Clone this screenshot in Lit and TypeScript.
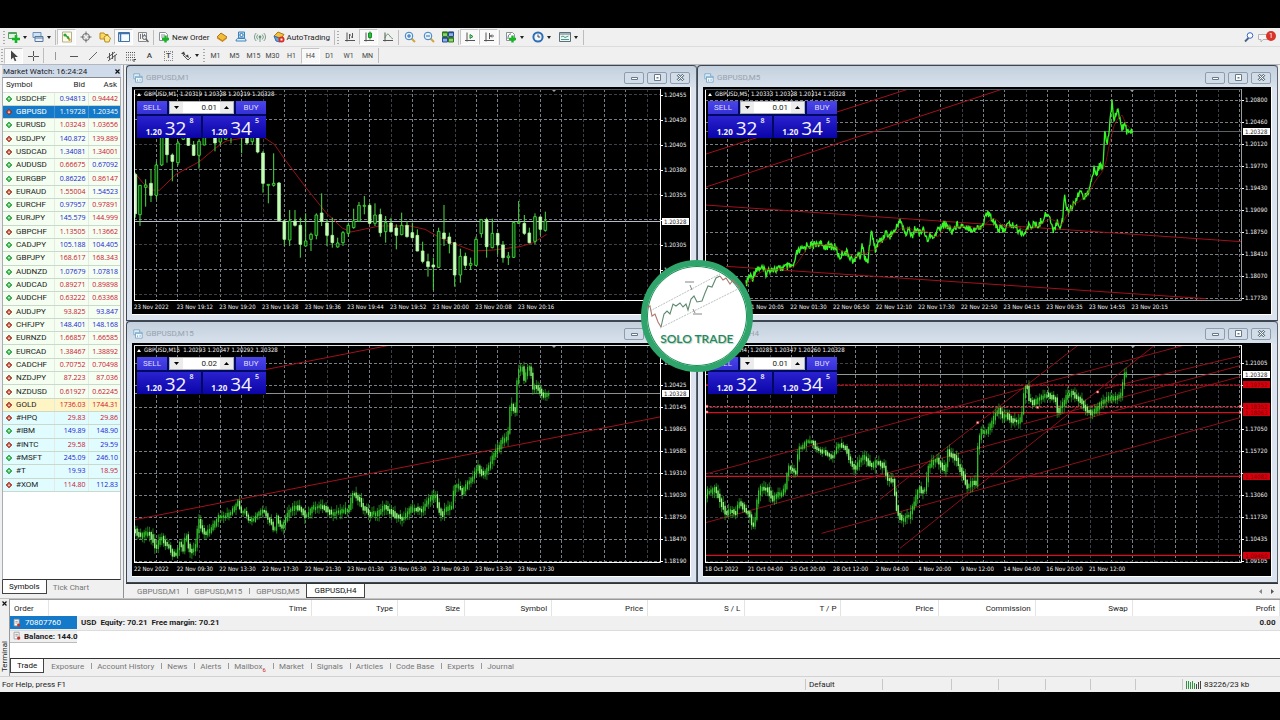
import { LitElement, html, svg, css } from "lit";
import { customElement, property } from "lit/decorators.js";
import { classMap } from "lit/directives/class-map.js";

/* ---------- icons (12 x 12 units) ---------- */
const doc = svg`<path d="M1.5 1.5h6l2 2v6h-8z" fill="#fff" stroke="#8a9097"/>`;
const plus = svg`<path d="M7.5 4.5v7M4 8h7" stroke="#17b526" stroke-width="2.4"/>`;
const axes = svg`<path d="M3 1.5v9M1 9.5h10" stroke="#555" fill="none"/>`;
const icons: Record<string, unknown> = {
  newChart: svg`<path d="M.5 1.5h8v6h-8z" fill="#dff3e2" stroke="#55a060"/><path d="M.5 2.5h8" stroke="#55a060"/><path d="M8 4v8M4 8h8" stroke="#17b526" stroke-width="2.6"/>`,
  profiles: svg`<path d="M1 1.500h8v5h-8z" fill="#cfe0f3" stroke="#6e8fb5"/><path d="M3 5.500h8v5h-8z" fill="#e8f1fb" stroke="#56789f"/><path d="M3 7h8" stroke="#56789f"/>`,
  market: svg`<path d="M1.500 1h9v10h-9z" fill="#fffbe3" stroke="#b5b190"/><path d="M3.500 3.500l2.500 2 2.500 3" stroke="#25983a" stroke-width="1.200" fill="none"/><circle cx="4" cy="4" r="1.600" fill="#2aa43f"/><circle cx="7" cy="6.500" r="1.200" fill="#2aa43f"/><circle cx="8.500" cy="8.800" r="1.200" fill="#c99a2a"/>`,
  target: svg`<circle cx="6" cy="6" r="3.500" fill="none" stroke="#6c6c6c"/><path d="M6 .5v4M6 7.500v4M.5 6h4M7.500 6h4" stroke="#6c6c6c"/>`,
  stars: svg`<path d="M1 2h4l1 1.500h3V8H1z" fill="#fbd95e" stroke="#b88a1e"/><path d="M5 6l3-2 3.500 3-1.500 4H6z" fill="#ffe98a" stroke="#b88a1e"/>`,
  panel: svg`<path d="M.5 1.500h11v9H.5z" fill="#f6fbff" stroke="#4273a9"/><path d="M1 2.500h10M2.500 3v7" stroke="#4273a9" stroke-width="1.500"/>`,
  tester: svg`<path d="M1.500 1.500h8v9h-8z" fill="#f4f4f4" stroke="#888"/><path d="M3.500 3v5M5.500 2.500v4M7.500 3v3" stroke="#777"/><circle cx="7.500" cy="6.500" r="2" fill="#dfe8f0" stroke="#666"/><path d="M9 8l2.500 3" stroke="#666" stroke-width="1.500"/>`,
  order: svg`${doc}<path d="M3 4h4M3 6h3" stroke="#8a9097"/>${plus}`,
  gold: svg`<path d="M1 6l4-4 6 4-4.500 4z" fill="#f3bd3a" stroke="#a8741a"/><path d="M1 6v1.500L6.500 11 11 7.500V6L6.500 9.500z" fill="#c98a1f"/>`,
  person: svg`<path d="M3.500 1h6v6h-6z" fill="#bcdcf6" stroke="#3c83bd"/><circle cx="6.500" cy="4" r="1.600" fill="#fff" stroke="#2f73ac"/><path d="M1 10c0-2.500 2-2.500 3-2.500h5c1.500 0 2 1 2 2.500z" fill="#e5f1fb" stroke="#3c83bd"/>`,
  signal: svg`<circle cx="6" cy="6" r="1.400" fill="#4c9f5d"/><path d="M3.800 8.500a3.500 3.500 0 010-5M8.200 8.500a3.500 3.500 0 000-5M2.200 10a5.500 5.500 0 010-8M9.800 10a5.500 5.500 0 000-8M6 6v5" stroke="#7c9a90" fill="none"/>`,
  auto: svg`<path d="M1 5l4-4 6 2.500-3 4z" fill="#f2c23d" stroke="#a97b19"/><path d="M1 5l2 5 4 1V7.500z" fill="#6aa5dc" stroke="#3a6da4"/><circle cx="8.500" cy="8.500" r="3" fill="#d92b1f"/><path d="M7.500 7.500h2v2h-2z" fill="#fff"/>`,
  bars: svg`${axes}<path d="M5.500 3v5M8.500 2v5M5.500 4h1.500M7 6h1.500" stroke="#555"/>`,
  candles: svg`${axes}<path d="M7 .5v8" stroke="#188d27"/><path d="M5.500 2h3v4.500h-3z" fill="#27c43a" stroke="#188d27"/>`,
  line: svg`${axes}<path d="M3 7c1.500-4 3-5 4.500-2.500S10 7 11 8" stroke="#5a8d62" fill="none"/>`,
  zoomIn: svg`<path d="M7.500 7.500l3.500 3.500" stroke="#d0a53a" stroke-width="2"/><circle cx="5" cy="5" r="3.800" fill="#e6f2fd" stroke="#3b7ec2"/><path d="M3 5h4M5 3v4" stroke="#2a6bb0"/>`,
  zoomOut: svg`<path d="M7.500 7.500l3.500 3.500" stroke="#d0a53a" stroke-width="2"/><circle cx="5" cy="5" r="3.800" fill="#e6f2fd" stroke="#3b7ec2"/><path d="M3 5h4" stroke="#2a6bb0"/>`,
  tile: svg`<path d="M.5 1h5v4.500h-5zM6.500 6.500h5V11h-5z" fill="#8fd070" stroke="#2b7a1c"/><path d="M6.500 1h5v4.500h-5zM.5 6.500h5V11h-5z" fill="#8fb0e6" stroke="#274b8b"/><path d="M.5 1.500h5M6.500 7h5" stroke="#2b7a1c" stroke-width="1.600"/><path d="M6.500 1.500h5M.5 7h5" stroke="#274b8b" stroke-width="1.600"/>`,
  scroll: svg`${axes}<path d="M6 3.500v4L9 5.500z" fill="#8fd79a" stroke="#2b8f3b"/>`,
  shift: svg`${axes}<path d="M6.500 2v6M7 5h4M9 3.500L7.500 5 9 6.500" stroke="#555" fill="none"/>`,
  indicators: svg`${doc}<path d="M3 8c0-5 2-5 3-5" stroke="#666" fill="none"/>${plus}`,
  clock: svg`<circle cx="6" cy="6" r="4.600" fill="#f1f7fe" stroke="#2c6fb7" stroke-width="2"/><path d="M6 3.500V6h2.200" stroke="#444" fill="none"/>`,
  template: svg`<path d="M.5 1.500h11v9H.5z" fill="#eef6f4" stroke="#5b6f7c"/><path d="M1 3h10" stroke="#5b6f7c"/><path d="M2 6l2-1 2 1.500L9.500 5M2 8.500h8" stroke="#4a9a8a" fill="none"/>`,
  cursor: svg`<path d="M3 .5v9l2.200-2 1.600 3.800 1.500-.7-1.600-3.600H10z" fill="#444"/>`,
  cross: svg`<path d="M6.500 1v10M1 6.500h11" stroke="#555"/><path d="M6 6h1v1H6z" fill="#f0f0f0"/>`,
  vline: svg`<path d="M6.500 2v8" stroke="#999"/>`,
  hline: svg`<path d="M2 6.500h8" stroke="#555"/>`,
  trend: svg`<path d="M2 10L10 2" stroke="#666"/>`,
  channel: svg`<path d="M1 8l8-6M2 11l9-7M3.500 3v7M6.500 2v7M9 5v6" stroke="#555"/>`,
  fibo: svg`<path d="M1 2.500h10M1 5h10M1 7.500h10M1 10h7" stroke="#555" stroke-dasharray="1 1"/><path d="M9 9v3M9 9.500h2" stroke="#444"/>`,
  arrows: svg`<path d="M1 3.500l3-2 1.500 4zM5 6l3-1.500L9 8z" fill="#444"/><path d="M3 5l5 5M8 10l3-3" stroke="#555"/>`,
  search: svg`<path d="M2 10.500l3.500-3.500" stroke="#49617f" stroke-width="1.800"/><circle cx="7" cy="4.500" r="2.800" fill="#fff" stroke="#3566c9"/>`,
  chat: svg`<path d="M.5 3.500h9v5H5L3 11V8.500H.5z" fill="#f7f7f7" stroke="#b4b4b4"/>`,
  page: svg`<path d="M2.500 1.500h6v8h-6z" fill="#fff" stroke="#999"/><path d="M4 4h3M4 6h3" stroke="#888"/><circle cx="8" cy="8.500" r="2" fill="#c9342a"/>`,
  windows: svg`<path d="M1 1h7v6H1z" fill="#eef6fc" stroke="#6ea3c8"/><path d="M3 4h8v7H3z" fill="#fff" stroke="#6ea3c8"/><path d="M3 5.500h8M5.500 7.500V10M8.500 7v2.500" stroke="#6ea3c8"/>`,
};
const icon = (name: string) => html`<svg class="icon" viewBox="0 0 12 12" aria-hidden="true">${icons[name]}</svg>`;

/* ---------- data ---------- */
type Quote = [string, "u" | "d", string, "b" | "r", string, "b" | "r"];
const quotes: Quote[] = [
  ["USDCHF", "u", "0.94813", "b", "0.94442", "r"], ["GBPUSD", "d", "1.19728", "b", "1.20345", "b"],
  ["EURUSD", "u", "1.03243", "r", "1.03656", "r"], ["USDJPY", "d", "140.872", "b", "139.889", "r"],
  ["USDCAD", "d", "1.34081", "b", "1.34001", "r"], ["AUDUSD", "u", "0.66675", "r", "0.67092", "b"],
  ["EURGBP", "u", "0.86226", "b", "0.86147", "r"], ["EURAUD", "d", "1.55004", "r", "1.54523", "b"],
  ["EURCHF", "u", "0.97957", "b", "0.97891", "r"], ["EURJPY", "u", "145.579", "b", "144.999", "r"],
  ["GBPCHF", "d", "1.13505", "r", "1.13662", "r"], ["CADJPY", "u", "105.188", "b", "104.405", "b"],
  ["GBPJPY", "u", "168.617", "r", "168.343", "r"], ["AUDNZD", "u", "1.07679", "b", "1.07818", "b"],
  ["AUDCAD", "u", "0.89271", "r", "0.89898", "r"], ["AUDCHF", "u", "0.63222", "r", "0.63368", "r"],
  ["AUDJPY", "d", "93.825", "r", "93.847", "b"], ["CHFJPY", "d", "148.401", "b", "148.168", "b"],
  ["EURNZD", "d", "1.66857", "r", "1.66585", "r"], ["EURCAD", "u", "1.38467", "r", "1.38892", "r"],
  ["CADCHF", "d", "0.70752", "r", "0.70498", "r"], ["NZDJPY", "d", "87.223", "r", "87.036", "r"],
  ["NZDUSD", "d", "0.61927", "r", "0.62245", "r"], ["GOLD", "d", "1736.03", "r", "1744.31", "r"],
  ["#HPQ", "d", "29.83", "r", "29.86", "r"], ["#IBM", "u", "149.89", "b", "148.90", "b"],
  ["#INTC", "d", "29.58", "r", "29.59", "b"], ["#MSFT", "u", "245.09", "b", "246.10", "b"],
  ["#T", "u", "19.93", "b", "18.95", "r"], ["#XOM", "d", "114.80", "r", "112.83", "b"],
];

/* x, high, low, body top, body bottom, filled */
const m1Candles: number[][] = [
  [28, 320, 455, 325, 443, 1], [42, 358, 480, 358, 446, 0], [59, 340, 422, 357, 364, 0], [75, 310, 408, 352, 388, 1],
  [91, 287, 400, 297, 388, 0], [107, 200, 300, 200, 297, 0], [123, 200, 290, 200, 266, 1], [139, 262, 346, 267, 286, 1],
  [156, 225, 298, 231, 290, 0], [172, 200, 222, 200, 220, 0], [187, 200, 240, 200, 238, 1], [203, 225, 270, 237, 268, 1],
  [219, 220, 308, 226, 268, 0], [235, 200, 238, 200, 237, 0], [267, 200, 256, 200, 231, 1], [283, 210, 237, 214, 228, 0],
  [299, 200, 222, 200, 220, 0], [315, 200, 232, 200, 212, 0], [347, 200, 262, 200, 212, 0], [363, 200, 237, 200, 231, 1],
  [379, 200, 237, 200, 227, 0], [395, 200, 262, 200, 258, 1], [411, 255, 380, 261, 352, 1], [427, 355, 412, 355, 358, 0],
  [443, 262, 362, 352, 358, 0], [459, 348, 466, 351, 464, 1], [475, 460, 540, 465, 520, 1], [491, 432, 540, 465, 522, 0],
  [507, 432, 482, 465, 478, 1], [523, 455, 575, 478, 535, 1], [539, 442, 540, 525, 540, 0], [555, 500, 555, 505, 520, 0],
  [571, 442, 520, 447, 508, 0], [587, 382, 480, 441, 466, 1], [603, 460, 540, 471, 508, 1], [619, 455, 545, 508, 530, 1],
  [635, 515, 545, 531, 543, 0], [651, 495, 540, 500, 530, 0], [667, 470, 512, 478, 502, 0], [683, 428, 488, 465, 485, 0],
  [699, 408, 466, 418, 466, 0], [715, 390, 445, 418, 421, 0], [731, 410, 474, 418, 472, 1], [747, 412, 480, 447, 472, 0],
  [763, 428, 512, 446, 500, 1], [779, 450, 530, 470, 497, 0], [795, 455, 500, 471, 497, 1], [811, 475, 550, 486, 508, 1],
  [827, 440, 508, 478, 506, 0], [843, 465, 515, 478, 512, 1], [859, 470, 518, 500, 515, 1], [874, 490, 556, 508, 555, 1],
  [890, 527, 592, 555, 586, 1], [906, 563, 632, 587, 602, 1], [922, 575, 672, 597, 603, 1], [938, 485, 606, 496, 604, 0],
  [954, 417, 540, 501, 518, 1], [970, 500, 562, 513, 532, 1], [986, 528, 662, 530, 627, 1], [1003, 548, 650, 571, 627, 0],
  [1018, 560, 608, 571, 598, 1], [1034, 575, 612, 592, 598, 0], [1050, 512, 600, 520, 598, 0], [1066, 459, 515, 461, 503, 0],
  [1082, 455, 575, 461, 542, 1], [1099, 458, 547, 502, 545, 0], [1115, 500, 565, 502, 537, 1], [1131, 525, 590, 537, 575, 1],
  [1147, 558, 597, 570, 575, 0], [1163, 466, 576, 470, 574, 0], [1178, 405, 474, 468, 472, 0], [1195, 447, 507, 472, 502, 1],
  [1210, 485, 532, 501, 530, 1], [1227, 442, 535, 452, 526, 0], [1243, 452, 508, 453, 490, 1], [1258, 437, 497, 465, 493, 0],
];
const m1Average = "30,325 50,350 75,372 100,373 150,325 220,287 270,245 300,225 360,215 415,215 445,235 480,285 540,365 600,440 650,487 675,498 760,480 852,480 897,490 942,515 1002,540 1042,555 1102,552 1182,542 1222,530 1262,505";

const m5Points = [150, 655, 160, 630, 170, 635, 180, 608, 195, 605, 212, 622, 225, 605, 240, 612, 260, 605, 285, 603, 297, 598, 300, 562, 320, 550, 335, 535, 350, 540, 365, 530, 380, 540, 400, 540, 420, 545, 430, 575, 445, 555, 460, 568, 475, 590, 485, 560, 492, 575, 498, 532, 505, 570, 517, 585, 525, 492, 537, 550, 550, 525, 560, 520, 567, 497, 580, 510, 600, 490, 612, 457, 620, 485, 630, 505, 640, 490, 650, 510, 660, 480, 670, 508, 678, 485, 690, 512, 696, 532, 702, 500, 712, 525, 722, 495, 740, 475, 755, 480, 768, 495, 785, 475, 810, 480, 835, 490, 858, 482, 872, 440, 892, 460, 907, 490, 922, 490, 940, 475, 957, 480, 970, 498, 987, 500, 1002, 475, 1027, 480, 1042, 455, 1057, 440, 1070, 493, 1082, 470, 1092, 480, 1100, 455, 1105, 387, 1114, 435, 1132, 415, 1152, 372, 1160, 393, 1177, 375, 1187, 350, 1194, 302, 1202, 330, 1210, 295, 1217, 310, 1222, 285, 1226, 200, 1234, 245, 1242, 165, 1248, 107, 1255, 163, 1267, 122, 1276, 190, 1284, 175, 1292, 195, 1310, 198];
const m15Points = [28, 632, 38, 640, 45, 648, 60, 640, 72, 640, 80, 655, 92, 685, 108, 652, 118, 670, 130, 680, 140, 700, 152, 705, 165, 665, 173, 690, 182, 640, 192, 690, 205, 692, 213, 670, 219, 598, 228, 625, 240, 645, 255, 630, 270, 610, 280, 590, 300, 590, 318, 580, 330, 560, 338, 545, 347, 575, 360, 575, 370, 600, 385, 600, 400, 580, 415, 570, 430, 600, 440, 610, 447, 638, 455, 590, 468, 625, 480, 600, 490, 575, 515, 560, 530, 575, 542, 590, 560, 565, 590, 560, 620, 580, 650, 575, 670, 570, 683, 520, 700, 535, 715, 565, 735, 582, 760, 580, 775, 560, 795, 575, 815, 590, 835, 595, 856, 568, 870, 568, 892, 570, 902, 550, 922, 530, 932, 530, 940, 570, 952, 585, 962, 565, 982, 562, 986, 500, 1002, 500, 1012, 518, 1027, 490, 1042, 475, 1057, 440, 1072, 465, 1092, 440, 1102, 410, 1117, 390, 1132, 360, 1142, 360, 1152, 325, 1155, 250, 1170, 275, 1178, 150, 1192, 145, 1197, 180, 1207, 145, 1216, 145, 1222, 205, 1230, 200, 1242, 210, 1252, 227, 1270, 224];
const h4Points = [197, 730, 203, 710, 215, 710, 225, 700, 235, 715, 245, 745, 260, 775, 275, 770, 290, 775, 298, 745, 308, 750, 320, 770, 330, 775, 340, 815, 348, 790, 352, 745, 362, 700, 370, 700, 385, 705, 400, 735, 415, 720, 430, 715, 440, 690, 446, 635, 460, 645, 470, 655, 478, 580, 490, 580, 500, 560, 520, 560, 530, 580, 545, 590, 555, 590, 570, 603, 583, 605, 590, 580, 600, 570, 615, 575, 625, 590, 632, 620, 648, 640, 660, 620, 675, 605, 685, 620, 695, 635, 715, 620, 735, 635, 745, 675, 765, 678, 768, 745, 778, 780, 790, 795, 800, 785, 810, 785, 820, 760, 830, 730, 838, 700, 850, 710, 860, 700, 865, 640, 880, 620, 895, 615, 905, 630, 918, 650, 925, 590, 935, 600, 950, 610, 965, 650, 975, 670, 985, 698, 1000, 680, 1012, 690, 1016, 575, 1025, 530, 1045, 530, 1058, 500, 1070, 475, 1080, 465, 1090, 485, 1102, 480, 1115, 495, 1135, 500, 1145, 495, 1150, 465, 1156, 397, 1165, 400, 1170, 435, 1185, 445, 1200, 430, 1225, 420, 1245, 430, 1252, 435, 1256, 485, 1262, 460, 1275, 440, 1285, 420, 1300, 415, 1315, 430, 1330, 445, 1340, 465, 1355, 475, 1370, 465, 1385, 445, 1405, 430, 1430, 430, 1445, 420, 1452, 375, 1456, 357, 1460, 357];

const noise = (i: number) => {
  const v = Math.sin(i * 12.9898) * 43758.5453;
  return v - Math.floor(v);
};
const valueAt = (pts: number[], x: number) => {
  for (let i = 2; i < pts.length; i += 2)
    if (x <= pts[i]) return pts[i - 1] + ((pts[i + 1] - pts[i - 1]) * (x - pts[i - 2])) / (pts[i] - pts[i - 2]);
  return pts[pts.length - 1];
};
const samples = (pts: number[], step: number) => {
  const out: number[] = [];
  for (let x = pts[0]; x <= pts[pts.length - 2]; x += step) out.push(x);
  return out;
};
const dense = (pts: number[]) =>
  svg`<polyline fill="none" stroke="#37f527" stroke-width="4" points=${samples(pts, 2)
    .map((x, i) => `${x},${(valueAt(pts, x) + (noise(i) - 0.5) * 25).toFixed(1)}`).join(" ")}/>`;
const small = (pts: number[], step: number) =>
  samples(pts, step).map((x, i) => {
    const a = valueAt(pts, x - step / 2), b = valueAt(pts, x + step / 2);
    const top = Math.min(a, b) - 2 - noise(i) * 7, bot = Math.max(a, b) + 2 + noise(i + 9) * 7;
    const down = b > a;
    return svg`<path d="M${x} ${top - 2 - noise(i + 3) * 16}V${bot + 2 + noise(i + 5) * 16}" stroke="#2fb428" stroke-width="2"/>
      <path d="M${x} ${top}V${bot}" stroke=${down ? "#8ff57c" : "#35d62d"} stroke-width=${down ? 4 : 3}/>`;
  });
const follow = (pts: number[], lag: number) =>
  svg`<polyline fill="none" stroke="#b01414" stroke-width="2" points=${samples(pts, 12)
    .map((x) => `${x},${((valueAt(pts, x) + valueAt(pts, Math.max(pts[0], x - lag)) + valueAt(pts, Math.max(pts[0], x - 2 * lag))) / 3).toFixed(1)}`).join(" ")}/>`;
const red = (d: string, w = 2) => svg`<path d=${d} fill="none" stroke="#a3101c" stroke-width=${w}/>`;
const dot = (x: number, y: number) => svg`<path d="M${x - 3} ${y - 3}h6v6h-6z" fill="#fff" stroke="#f03a3a" stroke-width="2"/>`;

interface Chart {
  name: string; head: string; lot: string; box: number[]; first: number; pitch: number; dimRows: string;
  price: number; priceColor: string; frame: string; marker: number; pad: number; gap: number;
  labels: string[]; times: string[]; tags: [number, string][]; art: unknown;
}
const nov = (day: string, list: string) => list.split(" ").map((t) => `${day} Nov ${t}`);
const charts: Chart[] = [
  {
    name: "GBPUSD,M1", head: "GBPUSD,M1  1.20319 1.20338 1.20319 1.20328", lot: "0.01", box: [134, 89, 527, 212],
    first: 94, pitch: 25, dimRows: "alt", price: 221, priceColor: "#b9b9cc", frame: "#fff", marker: 554, pad: 0, gap: 13,
    labels: ["1.20455", "1.20430", "1.20405", "1.20380", "1.20355", "", "1.20305", "1.20280"],
    times: ["23 Nov 2022", ...nov("23", "19:12 19:20 19:28 19:36 19:44 19:52 20:00 20:08 20:16")], tags: [],
    art: svg`<g transform="translate(126 66) scale(.33333)"><polyline points=${m1Average} fill="none" stroke="#9c1216" stroke-width="3"/>
      ${m1Candles.map(([x, h, l, t, b, f]) => svg`<path d="M${x} ${h}V${l}" stroke="#4ade42" stroke-width="3"/>
        <path d="M${x - 4} ${t}h8V${b}h-8z" fill=${f ? "#c6ffb8" : "#033d06"} stroke=${f ? "#b2f7a4" : "#4be043"} stroke-width="2.5"/>`)}</g>`,
  },
  {
    name: "GBPUSD,M5", head: "GBPUSD,M5  1.20333 1.20338 1.20314 1.20328", lot: "0.01", box: [705, 89, 537, 212],
    first: 100, pitch: 22, dimRows: "", price: 131, priceColor: "#5c6064", frame: "#9a9da0", marker: 1132, pad: 5, gap: 10,
    labels: ["1.20800", "1.20460", "1.20120", "1.19770", "1.19430", "1.19090", "1.18750", "1.18410", "1.18070", "1.17730"],
    times: ["21 Nov 2022", "21 Nov 20:05", ...nov("22", "01:30 06:50 12:10 17:30 22:50"), ...nov("23", "04:15 09:35 14:55 20:15")], tags: [],
    art: svg`<g transform="translate(696 66) scale(.33333)">${red("M27 265L635 70M27 364L917 70M27 417L1636 527M90 601L1530 698", 3)}
      ${dense(m5Points)}${follow(m5Points, 14)}</g>`,
  },
  {
    name: "GBPUSD,M15", head: "GBPUSD,M15  1.20293 1.20347 1.20292 1.20328", lot: "0.02", box: [134, 345, 527, 218],
    first: 363, pitch: 22, dimRows: "", price: 393, priceColor: "#8d9092", frame: "#fff", marker: 554, pad: 12, gap: 10,
    labels: ["1.20705", "1.20425", "1.20145", "1.19865", "1.19585", "1.19310", "1.19030", "1.18750", "1.18470", "1.18190"],
    times: ["22 Nov 2022", ...nov("22", "09:30 13:30 17:30 21:30"), ...nov("23", "01:30 05:30 09:30 13:30 17:30")], tags: [],
    art: svg`<g transform="translate(126 320) scale(.33333)">${red("M27 599L1606 290M300 172L795 75", 3)}${small(m15Points, 5.3)}</g>`,
  },
  {
    name: "GBPUSD,H4", head: "GBPUSD,H4  1.20285 1.20347 1.20260 1.20328", lot: "0.01", box: [705, 345, 537, 218],
    first: 363, pitch: 22, dimRows: "all", price: 374, priceColor: "#8e9c98", frame: "#fff", marker: 1133, pad: 12, gap: 10,
    labels: ["1.21005", "", "", "1.17050", "1.15720", "", "1.13060", "1.11730", "1.10435", "1.09105"],
    times: ["18 Oct 2022", "21 Oct 04:00", "25 Oct 20:00", "28 Oct 12:00", ...nov("2", "04:00"), ...nov("4", "20:00"), ...nov("9", "12:00"), ...nov("14", "04:00"), ...nov("16", "20:00"), ...nov("21", "12:00")],
    tags: [[384, "1.19752"], [406, "1.18352"], [412, "1.18063"], [476, "1.14082"], [555, "1.09460"]],
    art: svg`<g transform="translate(640 255) scale(.33333)">
      <path d="M197 473H1808M197 664H1808M197 901H1808" stroke="#d01222" stroke-width="4"/>
      <path d="M197 390H1808" stroke="#b01220" stroke-width="4" stroke-dasharray="8 3"/>
      <path d="M197 455H1808" stroke="#e23a4a" stroke-width="4" stroke-dasharray="7 4"/>
      ${red("M197 657L1635 270M197 803L1800 365M545 835L1800 488M720 733L1315 270M780 880L1545 270M1150 507L1800 332M1395 400L1800 303", 2.6)}
      ${small(h4Points, 5.3)}
      ${dot(201, 454)}${dot(201, 471)}${dot(1013, 503)}${dot(1373, 411)}${dot(1193, 457)}${dot(1801, 454)}${dot(1801, 472)}</g>`,
  },
];

/* ---------- chart window ---------- */
@customElement("chart-window")
export class ChartWindow extends LitElement {
  @property({ attribute: false }) chart!: Chart;
  static styles = css`
    :host { display: flex; flex-direction: column; min-width: 0; min-height: 0; box-sizing: border-box;
      border: 1px solid #3d4651; border-right-color: #5a6470; border-radius: 4px 4px 0 0; padding: 0 5px 5px;
      background: linear-gradient(#c4d0dd, #d6e1ec 21px, #dbe3ee 22px); font-family: Roboto, sans-serif; }
    .title { display: flex; align-items: center; gap: 3px; height: 21px; padding: 2px 1px 0 1px; box-sizing: border-box; flex: none; font-size: 8px; color: #97a2ae; }
    .title span { flex: 1; }
    .icon { width: 10px; height: 10px; }
    button { font: inherit; border: 0; padding: 0; margin: 0; }
    .title .ctl { box-sizing: border-box; width: 20px; height: 12px; border: 1px solid #8d9cae; border-radius: 2px; background: #d3dde8; display: grid; place-items: center; }
    .ctl svg { width: 9px; height: 7px; display: block; }
    .body { flex: 1; min-height: 0; position: relative; display: grid; grid-template: 1fr 13px / 1fr 29px; background: #000;
      padding: 2px 0 0 2px; border-right: 1px solid #fff; border-bottom: 1px solid #fff; }
    .plot { display: block; width: 100%; height: 100%; min-height: 0; }
    .cell { position: relative; min-height: 0; min-width: 0; }
    .cell > .plot { position: absolute; inset: 0; }
    .prices { position: relative; display: flex; flex-direction: column; min-height: 0; box-sizing: border-box; contain: size; }
    .prices, .times, .head { font: 6px "DejaVu Sans Condensed", "DejaVu Sans", sans-serif; color: #f4f4f4; white-space: pre; }
    .lab { height: 12px; line-height: 12px; display: flex; align-items: center; gap: 1px; flex: none; }
    .lab::before { content: ""; width: 2px; height: 1px; background: #fff; }
    .tag { position: absolute; left: 1px; right: 1px; height: 7px; line-height: 7px; padding-left: 2px; margin-top: -3px; background: #fff; color: #222; }
    .tag.red { background: #d8000c; color: #7c0008; }
    .times { display: flex; grid-column: 1 / 3; line-height: 12px; }
    .times span { flex: none; }
    .head { position: absolute; top: 3px; left: 5px; line-height: 8px; display: flex; gap: 3px; align-items: center; }
    .head::before { content: ""; border: 2px solid transparent; border-bottom: 3px solid #fff; border-top: 0; }
    .trade { position: absolute; left: 5px; top: 14px; width: 129px; height: 37px; display: grid; grid-template: 13px 22px / 30px 65px 30px; gap: 2px 2px; color: #e4e4ff; background: #000a60; }
    .side { background: linear-gradient(#4b46ea, #352fd6); font-size: 8px; color: #dcdcff; }
    .lot { display: grid; grid-template-columns: 13px 1fr 13px; background: #fff; border: 1px solid #b0b0b8; box-sizing: border-box; }
    .lot button { background: #ececec; display: grid; place-items: center; }
    .lot svg { width: 5px; height: 3px; display: block; }
    .lot input { font: 8px Roboto, sans-serif; min-width: 0; border: 0; padding: 0 3px 0 0; text-align: right; color: #222; background: #fff; }
    .quotes { grid-column: 1 / 4; display: grid; grid-template-columns: 1fr 1fr; gap: 2px; }
    .quote { font-family: "Open Sans", sans-serif; color: #f4f4ff; background: linear-gradient(#2a22cf, #0a04a8); display: flex; align-items: flex-end; justify-content: flex-end; gap: 3px; padding: 0 7px 0 0; height: 22px; }
    .quote b { font-size: 8px; line-height: 12px; }
    .quote big { font-size: 19px; line-height: 20px; }
    .quote sup { font-size: 7px; line-height: 10px; align-self: flex-start; font-weight: 600; vertical-align: baseline; }
  `;
  render() {
    const c = this.chart;
    const [x, y, w, h] = c.box;
    const cols = Array.from({ length: 25 }, (_, i) => i).filter((i) => 22 + i * 21.33 < w);
    const rows = Array.from({ length: 10 }, (_, i) => i).filter((i) => c.first + i * c.pitch < y + h);
    const pct = (v: number) => `${((100 * (v - y)) / h).toFixed(2)}%`;
    return html`
      <div class="title">
        <svg class="icon" viewBox="0 0 12 12">${icons.windows}</svg><span>${c.name}</span>
        <button class="ctl" aria-label="Minimize"><svg viewBox="0 0 9 7"><path d="M1.500 3.500h6v2h-6z" fill="#fff" stroke="#66788c"/></svg></button>
        <button class="ctl" aria-label="Restore"><svg viewBox="0 0 9 7"><path d="M1.500.5h6v6h-6z" fill="#fff" stroke="#66788c"/><path d="M3.500 3h2v1.500h-2z" fill="#66788c"/></svg></button>
        <button class="ctl" aria-label="Close"><svg viewBox="0 0 9 7"><path d="M1.500.5l6 6M7.500.5l-6 6" stroke="#66788c" stroke-width="2.600"/><path d="M1.500.5l6 6M7.500.5l-6 6" stroke="#fff"/></svg></button>
      </div>
      <div class="body">
        <div class="cell"><svg class="plot" viewBox=${c.box.join(" ")} preserveAspectRatio="none">
          <g shape-rendering="crispEdges" stroke-dasharray="3 2">
            ${cols.map((i) => svg`<path d="M${Math.round(x + 22 + i * 21.33) + 0.5} ${y}V${y + h}" stroke=${i % 3 === 2 ? "#3c4044" : "#777e84"}/>`)}
            ${rows.map((i) => svg`<path d="M${x} ${c.first + i * c.pitch + 0.5}H${x + w}" stroke=${c.dimRows === "all" || (c.dimRows === "alt" && i % 2 === 0) ? "#3e4246" : "#777e84"}/>`)}
          </g>
          <path d="M${x} ${c.price + 0.5}H${x + w}" stroke=${c.priceColor} shape-rendering="crispEdges"/>
          ${c.art}
          <path d="M${c.marker - 3} ${y}h6l-3 3z" fill="#9aa0a4"/>
          <path d="M${x + 0.5} ${y}V${y + h}" stroke="#fff"/><path d="M${x} ${y + 0.5}H${x + w}" stroke=${y > 300 ? "#dfe3e6" : "#4a555c"}/>
          <path d="M${x} ${y + h - 0.5}H${x + w - 0.5}V${y}" fill="none" stroke=${c.frame}/>
        </svg></div>
        <div class="prices" style="padding-top:${c.pad}px;gap:${c.gap}px">
          ${c.labels.map((l) => html`<div class="lab">${l}</div>`)}
          ${c.tags.map(([v, t]) => html`<div class="tag red" style="top:${pct(v)}">${t}</div>`)}
          <div class="tag" style="top:${pct(c.price)}">1.20328</div>
        </div>
        <div class="times">${c.times.map((t) => html`<span style="width:${((100 * 42.67) / (w + 29)).toFixed(3)}%">${t}</span>`)}</div>
        <div class="head">${c.head}</div>
        <div class="trade">
          <button class="side">SELL</button>
          <div class="lot">
            <button aria-label="Decrease volume"><svg viewBox="0 0 5 3"><path d="M0 0h5L2.500 3z"/></svg></button>
            <input aria-label="Volume" .value=${c.lot} />
            <button aria-label="Increase volume"><svg viewBox="0 0 5 3"><path d="M0 3h5L2.500 0z"/></svg></button>
          </div>
          <button class="side">BUY</button>
          <div class="quotes">
            <button class="quote"><b>1.20</b><big>32</big><sup>8</sup></button>
            <button class="quote"><b>1.20</b><big>34</big><sup>5</sup></button>
          </div>
        </div>
      </div>`;
  }
}

/* ---------- application ---------- */
/* heading and share of the table's width */
const tradeCols: [string, number][] = [["Order", 38], ["Time", 263], ["Type", 86], ["Size", 67], ["Symbol", 87], ["Price", 96], ["S / L", 97], ["T / P", 96], ["Price", 97], ["Commission", 97], ["Swap", 97], ["Profit", 147]];
const tradeTotal = tradeCols.reduce((sum, [, w]) => sum + w, 0);
const terminalTabs = ["Trade", "Exposure", "Account History", "News", "Alerts", "Mailbox", "Market", "Signals", "Articles", "Code Base", "Experts", "Journal"];

@customElement("app-root")
export class AppRoot extends LitElement {
  static styles = css`
    :host { display: block; box-sizing: border-box; min-height: 100vh; padding: 28px 0; background: #000; font: 8px Roboto, sans-serif; color: #1c1c1c; }
    * { box-sizing: border-box; }
    .app { display: flex; flex-direction: column; min-height: calc(100vh - 56px); background: #f0f0f0; }
    button { font: inherit; color: inherit; border: 0; background: none; padding: 0; margin: 0; white-space: nowrap; }
    .icon { width: 12px; height: 12px; display: block; flex: none; }
    .bar { display: flex; align-items: center; height: 19px; padding-left: 2px; flex: none; border-bottom: 1px solid #dcdcdc; }
    .bar.low { height: 18px; padding-left: 0; border-bottom: 1px solid #b5b8bb; }
    .grip { width: 2px; height: 13px; margin: 0 1px; background: repeating-linear-gradient(#aaa 0 1px, transparent 1px 3px); }
    .sep { width: 1px; height: 15px; margin: 0 1px; background: #bdbdbd; }
    .tool { width: 19px; height: 16px; display: grid; place-items: center; flex: none; }
    .tool.on { border: 1px solid #c3c3c3; border-right-color: #fff; border-bottom-color: #fff; background: #f9f9f9; }
    .combo, .wide { display: flex; align-items: center; gap: 3px; height: 16px; width: 24px; padding-left: 2px; flex: none; }
    .combo.roomy { width: 27px; padding-left: 4px; }
    .combo::after { content: ""; border: 2px solid transparent; border-top: 3px solid #222; border-bottom: 0; }
    .wide { width: auto; padding: 0 3px; gap: 2px; }
    .tf { font-size: 7px; color: #444; }
    .letter { font-weight: 500; color: #444; }
    .boxed { outline: 1px dotted #888; padding: 0 1px; line-height: 8px; }
    .fill { flex: 1; }
    .alert { position: relative; margin-right: 10px; }
    .alert i { position: absolute; right: -6px; top: 0; width: 10px; height: 10px; border-radius: 5px; background: #d8342a; color: #fff; font: 7px/10px Roboto, sans-serif; text-align: center; }
    .main { flex: 1; display: flex; min-height: 0; }
    .market { width: 124px; flex: none; margin-right: 2px; padding: 0 2px 0 2px; display: flex; flex-direction: column; border-right: 1px solid #8c9299; background: #f0f0f0; }
    .caption { display: flex; align-items: center; justify-content: space-between; height: 12px; padding: 0 1px; background: #cfdbea; flex: none; }
    .x { width: 5px; height: 5px; display: block; }
    .list { flex: 1; background: #fff; border: 1px solid #a9adb2; border-top-color: #888; border-bottom-color: #333; }
    table { border-collapse: collapse; width: 100%; table-layout: fixed; }
    .rates { height: 414px; }
    .rates th { height: 14px; font-weight: 400; padding: 0 3px; text-align: right; border-bottom: 1px solid #dcdcdc; }
    .rates th:first-child { text-align: left; width: 51px; }
    .rates th:nth-child(2) { width: 34px; }
    .rates td { padding: 0 2px; text-align: right; font: 7px/10px "Open Sans", sans-serif; border-bottom: 1px solid #cbd8cc; border-left: 1px solid #e3ebe3; }
    .rates td:first-child { text-align: left; font: 8px/10px Roboto, sans-serif; border-left: 0; }
    .rates tr { background: #f4fff1; }
    .rates thead tr { background: #fff; }
    .rates .gold { background: #fff4c4; }
    .rates .stock { background: #e0fcff; }
    .rates .sel { background: #1379c8; color: #fff; }
    .rates .sel td { color: #fff; border-left-color: #3f93d4; }
    .sym { display: flex; align-items: center; gap: 3px; }
    .sym svg { width: 8px; height: 8px; flex: none; display: block; }
    .b { color: #1b1bd0; }
    .r { color: #cc1330; }
    .tabs { display: flex; height: 15px; flex: none; align-items: stretch; color: #777; }
    .tabs button { padding: 0 7px; position: relative; }
    .tabs button + button::before { content: ""; position: absolute; left: 0; top: 4px; bottom: 4px; width: 1px; background: #999; }
    .tabs button.on { background: #fff; color: #111; border: 1px solid #444; border-top: 0; }
    .tabs button.on::before, .tabs button.on + button::before { display: none; }
    .market .tabs { height: 14px; margin-bottom: 4px; }
    .market .tabs button { padding: 0 6px; }
    .work { flex: 1; min-width: 0; display: flex; flex-direction: column; padding-right: 2px; }
    .mdi { flex: 1; position: relative; min-height: 0; display: grid; grid-template: 256fr 262fr / 571fr 581fr; background: #bcc8d6; }
    .logo { position: absolute; left: 49.55%; top: 48.4%; width: 112px; height: 112px; margin: -56px; border-radius: 56px; background: #fff; border: 6px solid #2fa56b; box-shadow: inset 0 0 0 1px #1e8f58; display: flex; flex-direction: column; align-items: center; }
    .logo svg { width: 100px; height: 64px; display: block; }
    .logo span { font: 600 12px/18px Lato, sans-serif; color: #1f8a60; text-shadow: 1px 1px 1px #b9c9c0; white-space: nowrap; }
    .charttabs { border-top: 1px solid #333; padding-left: 4px; }
    .charttabs .end { margin-left: auto; display: flex; gap: 9px; align-items: center; padding-right: 4px; }
    .charttabs .end svg { width: 3px; height: 5px; }
    .terminal { display: flex; flex: none; height: 78px; border-top: 1px solid #c2c2c2; }
    .rail { width: 9px; flex: none; display: flex; flex-direction: column; align-items: center; justify-content: space-between; padding: 2px 0 4px; }
    .rail span { writing-mode: vertical-rl; transform: rotate(180deg); line-height: 9px; }
    .pane { flex: 1; display: flex; flex-direction: column; min-width: 0; border-left: 1px solid #999; }
    .sheet { flex: 1; background: #fff; border-top: 1px solid #999; border-bottom: 1px solid #333; }
    .orders th { height: 16px; font-weight: 400; text-align: right; padding: 0 4px; border-right: 1px solid #e4e4e4; }
    .orders th:first-child { text-align: left; }
    .orders td { height: 14px; padding: 0; background: #f0f0f0; font-weight: 700; border-bottom: 1px solid #dcdcdc; }
    .orders td:last-child { text-align: right; padding-right: 4px; }
    .line { display: flex; align-items: center; gap: 4px; white-space: pre; height: 13px; }
    .pick { display: flex; align-items: center; gap: 3px; width: 67px; height: 13px; padding-left: 2px; background: #1379c8; color: #fff; font-weight: 400; }
    .orders .balance td { height: 13px; background: #fff; border-bottom: 0; }
    .balance .line { width: 67px; height: 12px; background: #f0f0f0; padding-left: 2px; gap: 2px; border-bottom: 1px solid #bbb; }
    .pick .icon, .balance .icon { width: 10px; height: 10px; }
    .terminal .tabs { height: 14px; margin-bottom: 3px; gap: 1px; }
    .terminal .tabs button { padding: 0 6px; }
    .tabs sub { color: #d02020; font-size: 6px; line-height: 0; }
    .status { display: flex; align-items: center; height: 16px; flex: none; border-top: 1px solid #d2d2d2; }
    .status div { height: 11px; line-height: 11px; padding: 0 3px; border-left: 1px solid #c8c8c8; }
    .status .help { flex: 1; border: 0; padding-left: 2px; }
    .status .conn { display: flex; gap: 3px; align-items: center; width: 98px; white-space: nowrap; }
    .conn svg { width: 15px; height: 8px; flex: none; }
  `;
  private tool(name: string, on = false) {
    return html`<button class=${classMap({ tool: true, on })} aria-label=${name}>${icon(name)}</button>`;
  }
  private combo(name: string, roomy = false) {
    return html`<button class=${classMap({ combo: true, roomy })} aria-label=${name}>${icon(name)}</button>`;
  }
  render() {
    const grip = html`<span class="grip"></span>`;
    const sep = html`<span class="sep"></span>`;
    const close = html`<button aria-label="Close"><svg class="x" viewBox="0 0 5 5"><path d="M.5.5l4 4M4.500.5l-4 4" stroke="#111" stroke-width="1.200"/></svg></button>`;
    return html`<div class="app">
      <div class="bar">${grip}${this.combo("newChart")}${this.combo("profiles")}${sep}
        ${this.tool("market", true)}${this.tool("target")}${this.tool("stars")}${this.tool("panel", true)}${this.tool("tester")}${sep}
        <button class="wide">${icon("order")}New Order</button>
        ${this.tool("gold")}${this.tool("person")}${this.tool("signal")}
        <button class="wide">${icon("auto")}AutoTrading</button>
        ${sep}${grip}${this.tool("bars")}${this.tool("candles", true)}${this.tool("line")}${sep}
        ${this.tool("zoomIn")}${this.tool("zoomOut")}${this.tool("tile")}${sep}
        ${this.tool("scroll", true)}${this.tool("shift", true)}${sep}
        ${this.combo("indicators", true)}${this.combo("clock", true)}${this.combo("template", true)}${sep}
        <span class="fill"></span>${this.tool("search")}
        <button class="alert" aria-label="Notifications">${icon("chat")}<i>1</i></button>
      </div>
      <div class="bar low">${grip}${this.tool("cursor", true)}${this.tool("cross")}${sep}
        ${this.tool("vline")}${this.tool("hline")}${this.tool("trend")}${this.tool("channel")}${this.tool("fibo")}
        <button class="tool letter">A</button><button class="tool letter"><span class="boxed">T</span></button>${this.combo("arrows")}${grip}
        ${["M1", "M5", "M15", "M30", "H1", "H4", "D1", "W1", "MN"].map((t) => html`<button class=${classMap({ tool: true, tf: true, on: t === "H4" })}>${t}</button>`)}${sep}
      </div>
      <div class="main">
        <section class="market">
          <div class="caption"><span>Market Watch: 16:24:24</span>${close}</div>
          <div class="list"><table class="rates">
            <thead><tr><th>Symbol</th><th>Bid</th><th>Ask</th></tr></thead>
            <tbody>${quotes.map(([s, d, bid, bc, ask, ac]) => html`<tr class=${classMap({ sel: s === "GBPUSD", gold: s === "GOLD", stock: s[0] === "#" })}>
              <td><span class="sym"><svg viewBox="0 0 8 8"><path d="M4 1L7 4 4 7 1 4z" fill=${d === "u" ? "#2fb545" : "#c5412c"} stroke=${d === "u" ? "#1d8730" : "#8a2a1c"} stroke-width=".6"/><path d=${d === "u" ? "M4 2.600L5.400 4H4.500v1.200h-1V4h-.9z" : "M4 5.400L5.400 4H4.500V2.800h-1V4h-.9z"} fill="#fff" opacity=".8"/></svg>${s}</span></td>
              <td class=${bc}>${bid}</td><td class=${ac}>${ask}</td></tr>`)}</tbody>
          </table></div>
          <div class="tabs"><button class="on">Symbols</button><button>Tick Chart</button></div>
        </section>
        <section class="work">
          <div class="mdi">
            ${charts.map((c) => html`<chart-window .chart=${c}></chart-window>`)}
            <div class="logo">
              <svg viewBox="0 0 100 64"><path d="M13 62L93 22M3 45L73 8" stroke="#9aa5a5" stroke-width=".7" stroke-dasharray="2 1"/>
                <path d="M14 61L17 48 20 45 23 48 26 38 29 40 33 37 36 41 39 38 41 44 44 33 47 30 50 36 55 35 58 27 61 20 65 21 69 12 73 10" fill="none" stroke="#5f8a72" stroke-width="1.100"/>
                <path d="M0 42L3 40 5 50 8 48 11 56 14 61M73 10L76 14 79 12 83 18 86 14 93 22" fill="none" stroke="#b0776e" stroke-width="1.100"/>
                <path d="M38 16h9M43 19l2 5M46 43l2 4M46 48h9" stroke="#777" stroke-width=".9"/></svg>
              <span>SOLO TRADE</span>
            </div>
          </div>
          <div class="tabs charttabs">${[0, 2, 1, 3].map((i) => html`<button class=${classMap({ on: i === 3 })}>${charts[i].name}</button>`)}
            <span class="end"><svg viewBox="0 0 3 5"><path d="M3 0v5L0 2.500z" fill="#888"/></svg><svg viewBox="0 0 3 5"><path d="M0 0v5l3-2.500z" fill="#555"/></svg></span></div>
        </section>
      </div>
      <section class="terminal">
        <div class="rail">${close}<span>Terminal</span></div>
        <div class="pane">
          <div class="sheet"><table class="orders">
            <colgroup>${tradeCols.map(([, w]) => html`<col style="width:${((100 * w) / tradeTotal).toFixed(3)}%" />`)}</colgroup>
            <thead><tr>${tradeCols.map(([n]) => html`<th>${n}</th>`)}</tr></thead>
            <tbody>
              <tr><td colspan="11"><div class="line"><span class="pick">${icon("page")}70807760</span>USD  Equity: 70.21  Free margin: 70.21</div></td><td>0.00</td></tr>
              <tr class="balance"><td colspan="12"><div class="line">${icon("page")}Balance: 144.0</div></td></tr>
            </tbody></table></div>
          <div class="tabs">${terminalTabs.map((t, i) => html`<button class=${classMap({ on: i === 0 })}>${t}${t === "Mailbox" ? html`<sub>6</sub>` : ""}</button>`)}</div>
        </div>
      </section>
      <footer class="status"><div class="help">For Help, press F1</div>
        ${["Default", "", "", "", "", "", ""].map((t, i) => html`<div style="width:${[77, 69, 47, 47, 45, 45, 47][i]}px">${t}</div>`)}
        <div class="conn"><svg viewBox="0 0 15 8"><path d="M.5 0v8M2.500 0v8M4.500 1v7M6.500 0v8M8.500 2v6" stroke="#2f9440"/><path d="M10.500 3v5M12.500 1v7M14.500 0v8" stroke="#444"/></svg>83226/23 kb</div>
      </footer>
    </div>`;
  }
}
